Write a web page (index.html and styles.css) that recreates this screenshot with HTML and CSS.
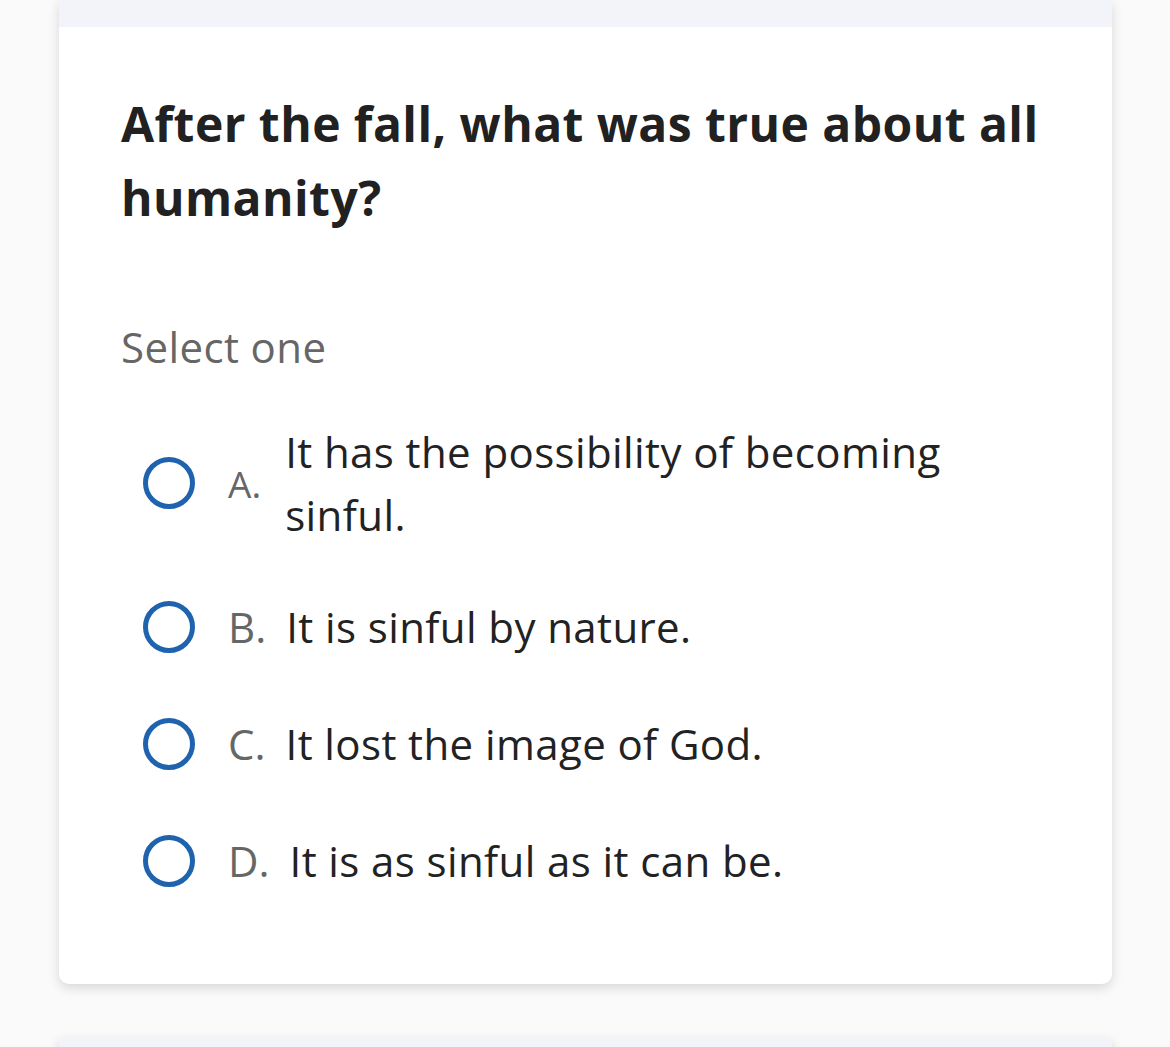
FILE: index.html
```html
<!DOCTYPE html>
<html lang="en">
<head>
<meta charset="utf-8">
<title>Question</title>
<link rel="stylesheet" href="styles.css">
</head>
<body>
<div class="page">
  <div class="card">
    <div class="card-head"></div>
    <div class="card-body">
      <h2 class="question">After the fall, what was true about all humanity?</h2>
      <p class="hint">Select one</p>
      <div class="options">
        <div class="option option-wrap">
          <span class="radio"></span>
          <span class="letter letter-small">A.</span>
          <span class="text">It has the possibility of becoming sinful.</span>
        </div>
        <div class="option">
          <span class="radio"></span>
          <span class="letter">B.</span>
          <span class="text">It is sinful by nature.</span>
        </div>
        <div class="option">
          <span class="radio"></span>
          <span class="letter">C.</span>
          <span class="text">It lost the image of God.</span>
        </div>
        <div class="option">
          <span class="radio"></span>
          <span class="letter">D.</span>
          <span class="text">It is as sinful as it can be.</span>
        </div>
      </div>
    </div>
  </div>
  <div class="card card-next">
    <div class="card-head"></div>
  </div>
</div>
</body>
</html>
```

FILE: styles.css
```css
html, body {
  margin: 0;
  padding: 0;
  background: #fafafa;
  font-family: "Open Sans", "Noto Sans", sans-serif;
}

.page {
  display: flex;
  flex-direction: column;
  gap: 54px;
  padding: 0 58px 0 59px;
}

.card {
  background: #ffffff;
  border-radius: 0 0 10px 10px;
  box-shadow: 0 4px 12px rgba(0, 0, 0, 0.14);
}

.card-head {
  height: 27px;
  background: #f3f4f9;
}

.card-body {
  padding: 60px 62px 92px 62px;
}

.question {
  margin: 0;
  font-size: 48px;
  line-height: 74px;
  font-weight: 700;
  letter-spacing: 0.45px;
  color: #212121;
}

.hint {
  margin: 82px 0 0 0;
  font-size: 42px;
  line-height: 59px;
  letter-spacing: 0.4px;
  color: #666666;
}

.options {
  margin-top: 44px;
  display: flex;
  flex-direction: column;
}

.option {
  display: flex;
  align-items: center;
}

.option + .option {
  margin-top: 54px;
}

.option-wrap + .option {
  margin-top: 49px;
}

.radio {
  flex-shrink: 0;
  width: 52px;
  height: 52px;
  box-sizing: border-box;
  border: 5px solid #1f63ae;
  border-radius: 50%;
  margin-left: 22px;
  margin-right: 33px;
}

.letter {
  flex-shrink: 0;
  font-size: 42px;
  line-height: 63px;
  color: #666666;
  margin-right: 20px;
}

.letter-small {
  font-size: 37px;
  margin-right: 24px;
}

.text {
  font-size: 42px;
  line-height: 63px;
  letter-spacing: 0.4px;
  color: #222222;
}

.card-next {
  height: 200px;
}
```
